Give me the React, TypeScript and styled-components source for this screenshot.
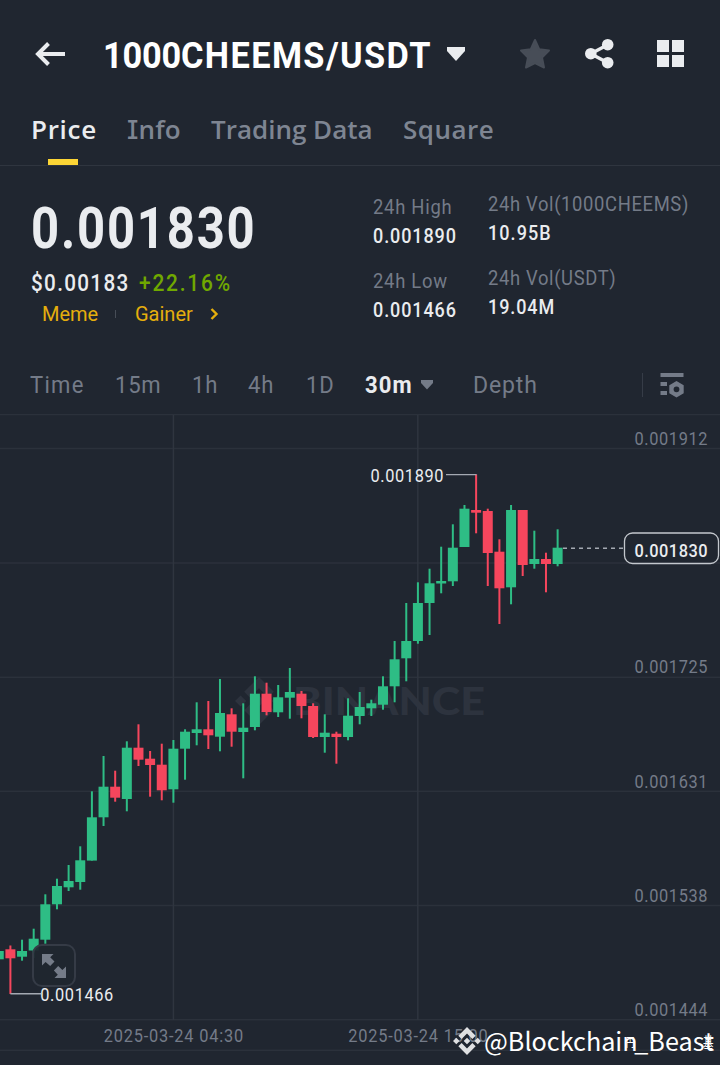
import React from "react";
import styled, { createGlobalStyle } from "styled-components";

const GlobalStyle = createGlobalStyle`
  * { box-sizing: border-box; }
  body { margin: 0; background: #202630; }
`;

const din = `Roboto, "Liberation Sans", sans-serif`;
const plex = `"Open Sans", "Noto Sans", sans-serif`;

const Screen = styled.main`
  position: relative;
  display: flex;
  flex-direction: column;
  width: 720px;
  height: 1065px;
  overflow: hidden;
  background: #202630;
  color: #eaecef;
  font-family: ${din};
  svg { display: block; flex: none; }
`;

/* Narrows the digits to the proportions of a DIN face. */
const Condensed = styled.span<{ $scale?: number; $spacing?: number }>`
  display: inline-block;
  transform: scaleX(${(p) => p.$scale ?? 0.9});
  transform-origin: 0 50%;
  letter-spacing: ${(p) => p.$spacing ?? 1}px;
  white-space: nowrap;
`;

const Header = styled.header`
  display: flex;
  align-items: center;
  height: 108px;
  padding: 0 35px 0 34px;
`;

const Pair = styled.h1`
  flex: none;
  margin: 3px 15px 0 37px;
  width: 328px;
  font-size: 36.5px;
  line-height: 44px;
  font-weight: 700;
  color: #fff;
  white-space: nowrap;
`;

const PairDigits = styled.span`
  letter-spacing: -0.2px;
`;

const HeaderActions = styled.div`
  display: flex;
  align-items: center;
  margin-left: auto;
  gap: 34px;
`;

const ShareIcon = styled.svg`
  margin-right: 8px;
`;

const Tabs = styled.nav`
  display: flex;
  height: 58px;
  padding-left: 31px;
  gap: 31px;
  border-bottom: 1px solid #2f353f;
`;

const Tab = styled.div<{ $active?: boolean; $width: number; $spacing?: number }>`
  width: ${(p) => p.$width}px;
  height: 58px;
  padding-top: 4px;
  font-family: ${plex};
  font-size: 26px;
  line-height: 34px;
  font-weight: 600;
  letter-spacing: ${(p) => p.$spacing ?? 0}px;
  color: ${(p) => (p.$active ? "#eaecef" : "#7e8592")};
  white-space: nowrap;
`;

const SerifCapital = styled.span`
  font-family: Inter, sans-serif;
  font-size: 25px;
  font-weight: 500;
  font-feature-settings: "cv08" 1;
`;

const TabMarker = styled.i`
  display: block;
  width: 30px;
  height: 6px;
  margin: 13px 0 0 17px;
  background: #fcd535;
`;

const Summary = styled.section`
  display: flex;
  height: 190px;
  padding-left: 31px;
`;

const PriceColumn = styled.div`
  display: flex;
  flex-direction: column;
  width: 342px;
`;

const LastPrice = styled.div`
  margin-top: 31px;
  height: 64px;
  font-size: 57px;
  line-height: 64px;
  font-weight: 700;
`;

const FiatRow = styled.div`
  display: flex;
  margin-top: 6px;
  height: 32px;
  font-size: 23.5px;
  line-height: 32px;
  font-weight: 500;
`;

const Fiat = styled.span`
  width: 108px;
`;

const Change = styled.span`
  color: #70a800;
`;

const TagRow = styled.div`
  display: flex;
  align-items: center;
  height: 30px;
  padding-left: 11px;
  font-size: 20px;
  line-height: 30px;
  color: #e5ae0d;
`;

const Tag = styled.span<{ $width: number }>`
  width: ${(p) => p.$width}px;
  white-space: nowrap;
`;

const TagDivider = styled.i`
  width: 1px;
  height: 8px;
  margin: 0 19px 0 18px;
  background: #474d57;
`;

const StatColumn = styled.div<{ $width: number; $top: number }>`
  display: flex;
  flex-direction: column;
  gap: 16px;
  width: ${(p) => p.$width}px;
  padding-top: ${(p) => p.$top}px;
`;

const Stat = styled.div`
  height: 58px;
`;

const StatLabel = styled.div`
  font-size: 20px;
  line-height: 28px;
  color: #747b88;
`;

const StatValue = styled.div`
  padding-top: 1px;
  font-size: 20px;
  line-height: 29px;
  font-weight: 500;
`;

const Intervals = styled.nav`
  display: flex;
  align-items: center;
  height: 58px;
  padding-left: 30px;
  font-size: 24px;
  line-height: 32px;
  color: #747b88;
`;

const Interval = styled.span<{ $width: number; $active?: boolean }>`
  width: ${(p) => p.$width}px;
  font-weight: ${(p) => (p.$active ? 700 : 400)};
  color: ${(p) => (p.$active ? "#eaecef" : "inherit")};
`;

const IntervalCaret = styled.svg`
  margin-right: 39px;
`;

const IntervalDivider = styled.i`
  width: 1px;
  height: 24px;
  margin-right: 17px;
  background: #363c47;
`;

const Chart = styled.svg`
  width: 720px;
  height: 651px;
  font-family: ${din};
`;

const ExpandButton = styled.button`
  position: absolute;
  left: 32px;
  top: 944px;
  display: flex;
  align-items: center;
  justify-content: center;
  width: 44px;
  height: 43px;
  padding: 0;
  border: 2px solid #353b46;
  border-radius: 10px;
  background: rgba(32, 38, 48, 0.92);
`;

const Signature = styled.div`
  position: absolute;
  left: 453px;
  top: 1024px;
  display: flex;
  align-items: center;
  height: 34px;
  gap: 3px;
`;

const Handle = styled.span`
  margin-top: -2px;
  font-family: "Noto Sans CJK SC", sans-serif;
  font-size: 25.2px;
  line-height: 34px;
  color: #fff;
  white-space: nowrap;
`;

const Stacked = styled.span<{ $width: number }>`
  position: relative;
  display: inline-block;
  width: ${(p) => p.$width}px;
`;

const Overprint = styled.span<{ $left: number; $top: number; $size: number }>`
  position: absolute;
  left: ${(p) => p.$left}px;
  top: ${(p) => p.$top}px;
  font-size: ${(p) => p.$size}px;
  line-height: 20px;
  transform: scaleX(0.7);
  transform-origin: 0 0;
`;

type Candle = [up: 0 | 1, top: number, bottom: number, high: number, low: number];

const candles: Candle[] = [
  [1, 951, 959.3, 951, 959.3],
  [0, 949.3, 958.3, 945.5, 994],
  [1, 951, 956.7, 939.7, 960.7],
  [1, 938.7, 950.5, 928.7, 958],
  [1, 904.3, 939.7, 894.3, 943.7],
  [1, 886, 904.3, 878.7, 909.3],
  [1, 881, 887.3, 865, 891],
  [1, 860.3, 882, 846.3, 889.7],
  [1, 817.3, 860.6, 791.3, 860.6],
  [1, 786.7, 817.3, 756, 826],
  [0, 786.7, 797.7, 770.7, 801.7],
  [1, 747.7, 799, 741.3, 811.3],
  [0, 747.7, 759.7, 724.3, 766],
  [0, 758.7, 765, 751, 796.7],
  [0, 764.7, 790.3, 743.7, 800.3],
  [1, 748.7, 789.3, 740, 802.7],
  [1, 731.7, 748.7, 729.3, 779.7],
  [1, 729.3, 733, 702.3, 745.3],
  [0, 729.3, 735.3, 701, 749],
  [1, 713, 736.7, 679, 751.3],
  [0, 714.3, 731.7, 708.3, 746.7],
  [1, 727.7, 732, 703.3, 778.3],
  [1, 693.7, 727, 676.3, 730.3],
  [0, 693.7, 712, 682.7, 715.3],
  [1, 697.3, 712.3, 685, 717],
  [1, 692, 697.7, 668, 718.7],
  [0, 693.7, 706, 691, 718.3],
  [0, 706, 737, 703.3, 738],
  [1, 732.7, 737, 714.3, 752.7],
  [0, 733.7, 737, 731.7, 763.7],
  [1, 715.7, 737, 698.3, 740.3],
  [1, 707, 716, 692, 724.3],
  [1, 703.3, 708.3, 699.7, 716],
  [1, 686.3, 704.7, 676.3, 709.7],
  [1, 659.3, 686.3, 641, 702.3],
  [1, 641, 658.3, 603, 681.3],
  [1, 603, 641, 582.3, 643.7],
  [1, 583.3, 603, 568.7, 635],
  [1, 581, 583.5, 546.7, 593.3],
  [1, 547.7, 581.3, 524.3, 586],
  [1, 508.7, 547, 505, 547],
  [0, 510, 512.7, 474.3, 533.3],
  [0, 511, 553, 508.7, 586],
  [0, 551.7, 588.3, 539.3, 624],
  [1, 510, 587.3, 505, 604.3],
  [0, 510, 565, 510, 576],
  [1, 559, 564, 530.7, 568.7],
  [0, 559, 564, 552.7, 592.3],
  [1, 547.7, 564, 529.3, 566.3],
];

const axisLabels: [string, number][] = [
  ["0.001912", 445],
  ["0.001725", 673],
  ["0.001631", 788],
  ["0.001538", 902],
  ["0.001444", 1016],
];

const gridRows = [414.5, 448.5, 563, 677.3, 791.3, 905.5, 1019.7, 1050.3];

const markPath =
  "M12 0 19.4 7.4 16.6 10.2 12 5.6 7.4 10.2 4.6 7.4ZM2.8 9.2 5.6 12 2.8 14.8 0 12ZM21.2 9.2 24 12 21.2 14.8 18.4 12ZM12 9.2 14.8 12 12 14.8 9.2 12ZM4.6 16.6 7.4 13.8 12 18.4 16.6 13.8 19.4 16.6 12 24Z";

const CHART_TEXT_SCALE = 0.88;

const ChartLabel = ({ x, y, width, children }: { x: number; y: number; width: number; children: string }) => (
  <text
    transform={`translate(${x} ${y}) scale(${CHART_TEXT_SCALE} 1)`}
    textLength={width / CHART_TEXT_SCALE}
  >
    {children}
  </text>
);

const PriceChart = () => (
  <Chart viewBox="0 414 720 651">
    {gridRows.map((y) => (
      <rect key={y} x="0" y={y - 0.75} width="720" height="1.5" fill="#2b313b" />
    ))}
    {[173.4, 417.8].map((x) => (
      <rect key={x} x={x - 0.75} y="415" width="1.5" height="605" fill="#2f353f" />
    ))}
    <g fill="#2d333e">
      <path transform="translate(235 677) scale(2)" d={markPath} />
      <text
        x="293"
        y="714.5"
        fontSize="37.5"
        fontWeight="900"
        textLength="192"
        lengthAdjust="spacingAndGlyphs"
        fontFamily="Lato, sans-serif"
      >
        BINANCE
      </text>
    </g>
    {candles.map(([up, top, bottom, high, low], i) => {
      const x = 10.4 + 11.643 * (i - 1);
      return (
        <g key={i} fill={up ? "#2ebd85" : "#f6465d"}>
          <rect x={x - 1} y={high} width="2" height={low - high} />
          <rect x={x - 5} y={top} width="10" height={bottom - top} />
        </g>
      );
    })}
    <path d="M446 474.6H476.5M10.4 993.7H41" stroke="#a4a9b2" strokeWidth="1.4" fill="none" />
    <path d="M563 548.2H624" stroke="#a4a9b2" strokeWidth="1.4" strokeDasharray="4 4" />
    <g fontSize="18.6" fill="#eaecef">
      <ChartLabel x={370.5} y={481.7} width={73}>0.001890</ChartLabel>
      <ChartLabel x={40.3} y={1000.7} width={73}>0.001466</ChartLabel>
    </g>
    <g fontSize="18.6" fill="#747b88">
      {axisLabels.map(([label, y]) => (
        <ChartLabel key={label} x={634.5} y={y - 0.3} width={73}>{label}</ChartLabel>
      ))}
      <ChartLabel x={103.7} y={1041.7} width={139.5}>2025-03-24 04:30</ChartLabel>
      <ChartLabel x={348.2} y={1041.7} width={139.5}>2025-03-24 15:00</ChartLabel>
    </g>
    <rect x="624.5" y="533" width="94" height="30.5" rx="8" fill="#202630" stroke="#c3c7cd" strokeWidth="1.3" />
    <g fontSize="18.6" fontWeight="500" fill="#eaecef">
      <ChartLabel x={634.5} y={556.8} width={73}>0.001830</ChartLabel>
    </g>
  </Chart>
);

export default function App() {
  return (
    <Screen>
      <GlobalStyle />
      <Header>
        <svg width="32" height="26" viewBox="0 0 32 26" fill="none" stroke="#eaecef" strokeWidth="4">
          <path d="M4 13H31M14.5 2.5 4 13 14.5 23.5" />
        </svg>
        <Pair>
          <Condensed $scale={0.94} $spacing={1.5}>
            <PairDigits>1000</PairDigits>CHEEMS/USDT
          </Condensed>
        </Pair>
        <svg width="20" height="16" viewBox="0 0 20 16" fill="#eaecef">
          <path d="M1 1H19V5L10 15 1 5Z" />
        </svg>
        <HeaderActions>
          <svg width="32" height="32" viewBox="0 0 32 32" fill="#474d57" stroke="#474d57" strokeWidth="2" strokeLinejoin="round">
            <path d="M16 2 20.3 11.3 30 12.5 23 19.5 25 29.5 16 25 7 29.5 9 19.5 2 12.5 11.7 11.3Z" />
          </svg>
          <ShareIcon width="30" height="32" viewBox="0 0 30 32" fill="#eaecef">
            <path d="M22.7 6.7 5.8 15.7 22.7 24.7" fill="none" stroke="#eaecef" strokeWidth="3.4" />
            <circle cx="22.7" cy="6.7" r="5.8" />
            <circle cx="5.8" cy="15.7" r="5.8" />
            <circle cx="22.7" cy="24.7" r="5.8" />
          </ShareIcon>
          <svg width="28" height="28" viewBox="0 0 28 28" fill="#eaecef">
            <path d="M0 0H12V12H0ZM15 0H27V12H15ZM0 15H12V27H0ZM15 15H27V27H15Z" />
          </svg>
        </HeaderActions>
      </Header>
      <Tabs>
        <Tab $active $width={65} $spacing={0.7}>
          Price
          <TabMarker />
        </Tab>
        <Tab $width={53} $spacing={0.2}>
          <SerifCapital>I</SerifCapital>nfo
        </Tab>
        <Tab $width={161}>Trading Data</Tab>
        <Tab $width={92} $spacing={0.5}>Square</Tab>
      </Tabs>
      <Summary>
        <PriceColumn>
          <LastPrice>
            <Condensed $scale={0.86} $spacing={2.1}>0.001830</Condensed>
          </LastPrice>
          <FiatRow>
            <Fiat>
              <Condensed $scale={0.88} $spacing={1.5}>$0.00183</Condensed>
            </Fiat>
            <Change>
              <Condensed $scale={0.89} $spacing={2}>+22.16%</Condensed>
            </Change>
          </FiatRow>
          <TagRow>
            <Tag $width={55}>Meme</Tag>
            <TagDivider />
            <Tag $width={75}>Gainer</Tag>
            <svg width="9" height="12" viewBox="0 0 9 12" fill="none" stroke="#e5ae0d" strokeWidth="2.4">
              <path d="M1.5 1 6.5 6 1.5 11" />
            </svg>
          </TagRow>
        </PriceColumn>
        <StatColumn $width={115} $top={27}>
          <Stat>
            <StatLabel>
              <Condensed $scale={0.92} $spacing={0.8}>24h High</Condensed>
            </StatLabel>
            <StatValue>
              <Condensed>0.001890</Condensed>
            </StatValue>
          </Stat>
          <Stat>
            <StatLabel>
              <Condensed $scale={0.92} $spacing={0.8}>24h Low</Condensed>
            </StatLabel>
            <StatValue>
              <Condensed>0.001466</Condensed>
            </StatValue>
          </Stat>
        </StatColumn>
        <StatColumn $width={220} $top={24}>
          <Stat>
            <StatLabel>
              <Condensed $scale={0.92} $spacing={0.7}>24h Vol(1000CHEEMS)</Condensed>
            </StatLabel>
            <StatValue>
              <Condensed $spacing={1.2}>10.95B</Condensed>
            </StatValue>
          </Stat>
          <Stat>
            <StatLabel>
              <Condensed $scale={0.92} $spacing={0.7}>24h Vol(USDT)</Condensed>
            </StatLabel>
            <StatValue>
              <Condensed $spacing={1}>19.04M</Condensed>
            </StatValue>
          </Stat>
        </StatColumn>
      </Summary>
      <Intervals>
        <Interval $width={85}>
          <Condensed $scale={0.92} $spacing={1.4}>Time</Condensed>
        </Interval>
        <Interval $width={77}>
          <Condensed $scale={0.92} $spacing={0.8}>15m</Condensed>
        </Interval>
        <Interval $width={56}>
          <Condensed $scale={0.92} $spacing={0.9}>1h</Condensed>
        </Interval>
        <Interval $width={58}>
          <Condensed $scale={0.92} $spacing={0.9}>4h</Condensed>
        </Interval>
        <Interval $width={59}>
          <Condensed $scale={0.92} $spacing={0.9}>1D</Condensed>
        </Interval>
        <Interval $width={55} $active>
          <Condensed $scale={0.92} $spacing={1.2}>30m</Condensed>
        </Interval>
        <IntervalCaret width="14" height="12" viewBox="0 0 14 12" fill="#747b88">
          <path d="M1 1H13V4L7 10.5 1 4Z" />
        </IntervalCaret>
        <Interval $width={169}>
          <Condensed $scale={0.96} $spacing={0.9}>Depth</Condensed>
        </Interval>
        <IntervalDivider />
        <svg width="24" height="25" viewBox="0 0 24 25" fill="#747b88">
          <path d="M0.5 0H23.5V4H0.5ZM0.5 9H7V13H0.5ZM0.5 18H7V22H0.5Z" />
          <path fillRule="evenodd" d="M16.5 8 23.7 12.2V20.3L16.5 24.5 9.3 20.3V12.2ZM16.5 13.4a2.9 2.9 0 1 0 0 5.8 2.9 2.9 0 0 0 0-5.8Z" />
        </svg>
      </Intervals>
      <PriceChart />
      <ExpandButton aria-label="Expand chart">
        <svg width="26" height="26" viewBox="0 0 26 26" fill="#747b88">
          <path d="M1 1H12.5L9.2 4.3 13.5 8.6 9.2 12.9 4.6 8.9 1 12.5ZM25 25H13.5L16.8 21.7 12.9 17.4 17.2 13.1 21.4 17.1 25 13.5Z" />
        </svg>
      </ExpandButton>
      <Signature>
        <svg width="28" height="28" viewBox="0 0 24 24" fill="#dfe0e2">
          <path d={markPath} />
        </svg>
        <Handle>
          @Blockchai
          <Stacked $width={12}>
            n<Overprint $left={4} $top={9} $size={12}>円</Overprint>
          </Stacked>
          _Beas
          <Stacked $width={10}>
            t<Overprint $left={-1} $top={9} $size={15}>基</Overprint>
          </Stacked>
        </Handle>
      </Signature>
    </Screen>
  );
}
